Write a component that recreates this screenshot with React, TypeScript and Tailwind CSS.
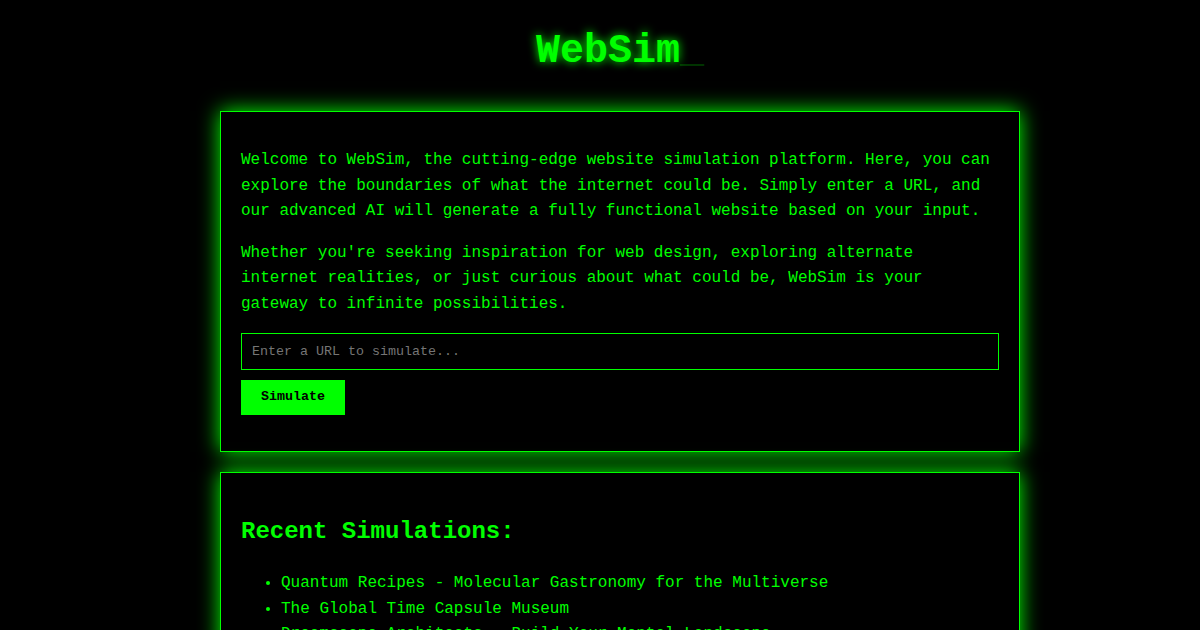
import React, { useState } from 'react';

const recent = [
  'Quantum Recipes - Molecular Gastronomy for the Multiverse',
  'The Global Time Capsule Museum',
  'Dreamscape Architects - Build Your Mental Landscape',
  'Interstellar Real Estate Agency',
];

export default function App() {
  const [url, setUrl] = useState('');

  return (
    <div className="min-h-screen bg-black text-[#00ff00] font-['Liberation_Mono','Courier_New',monospace] leading-[1.6] overflow-hidden">
      <div className="w-[800px] ml-[220px] pt-[20px]">
        {/* Header */}
        <h1 className="text-center text-[40px] leading-[64px] font-bold [text-shadow:0_0_10px_#00ff00]">
          WebSim<span className="opacity-20 [text-shadow:none]">_</span>
        </h1>

        {/* Intro card */}
        <div className="mt-[27px] border border-[#00ff00] px-5 pt-5 pb-5 shadow-[0_0_20px_#00ff00] bg-black">
          <p className="my-4 text-[16px] leading-[1.6]">
            Welcome to WebSim, the cutting-edge website simulation platform. Here, you can
            explore the boundaries of what the internet could be. Simply enter a URL, and
            our advanced AI will generate a fully functional website based on your input.
          </p>
          <p className="mt-4 mb-[15px] text-[16px] leading-[1.6]">
            Whether you're seeking inspiration for web design, exploring alternate
            internet realities, or just curious about what could be, WebSim is your
            gateway to infinite possibilities.
          </p>
          <div className="mb-[16px]">
            <input
              type="text"
              value={url}
              onChange={(e) => setUrl(e.target.value)}
              placeholder="Enter a URL to simulate..."
              className="block w-full h-[37px] px-[10px] bg-black border border-[#00ff00] text-[#00ff00] text-[13.33px] leading-normal placeholder:text-[#757575] outline-none"
            />
            <button className="mt-[10px] h-[35px] px-5 bg-[#00ff00] text-black text-[13.33px] font-bold leading-normal">
              Simulate
            </button>
          </div>
        </div>

        {/* Recent simulations */}
        <div className="mt-5 border border-[#00ff00] p-5 shadow-[0_0_20px_#00ff00] bg-black">
          <h2 className="mt-5 mb-5 text-[24px] font-bold leading-[1.6]">Recent Simulations:</h2>
          <ul className="list-disc pl-10 text-[16px] leading-[1.6]">
            {recent.map((r) => (
              <li key={r}>{r}</li>
            ))}
          </ul>
        </div>
      </div>
    </div>
  );
}
